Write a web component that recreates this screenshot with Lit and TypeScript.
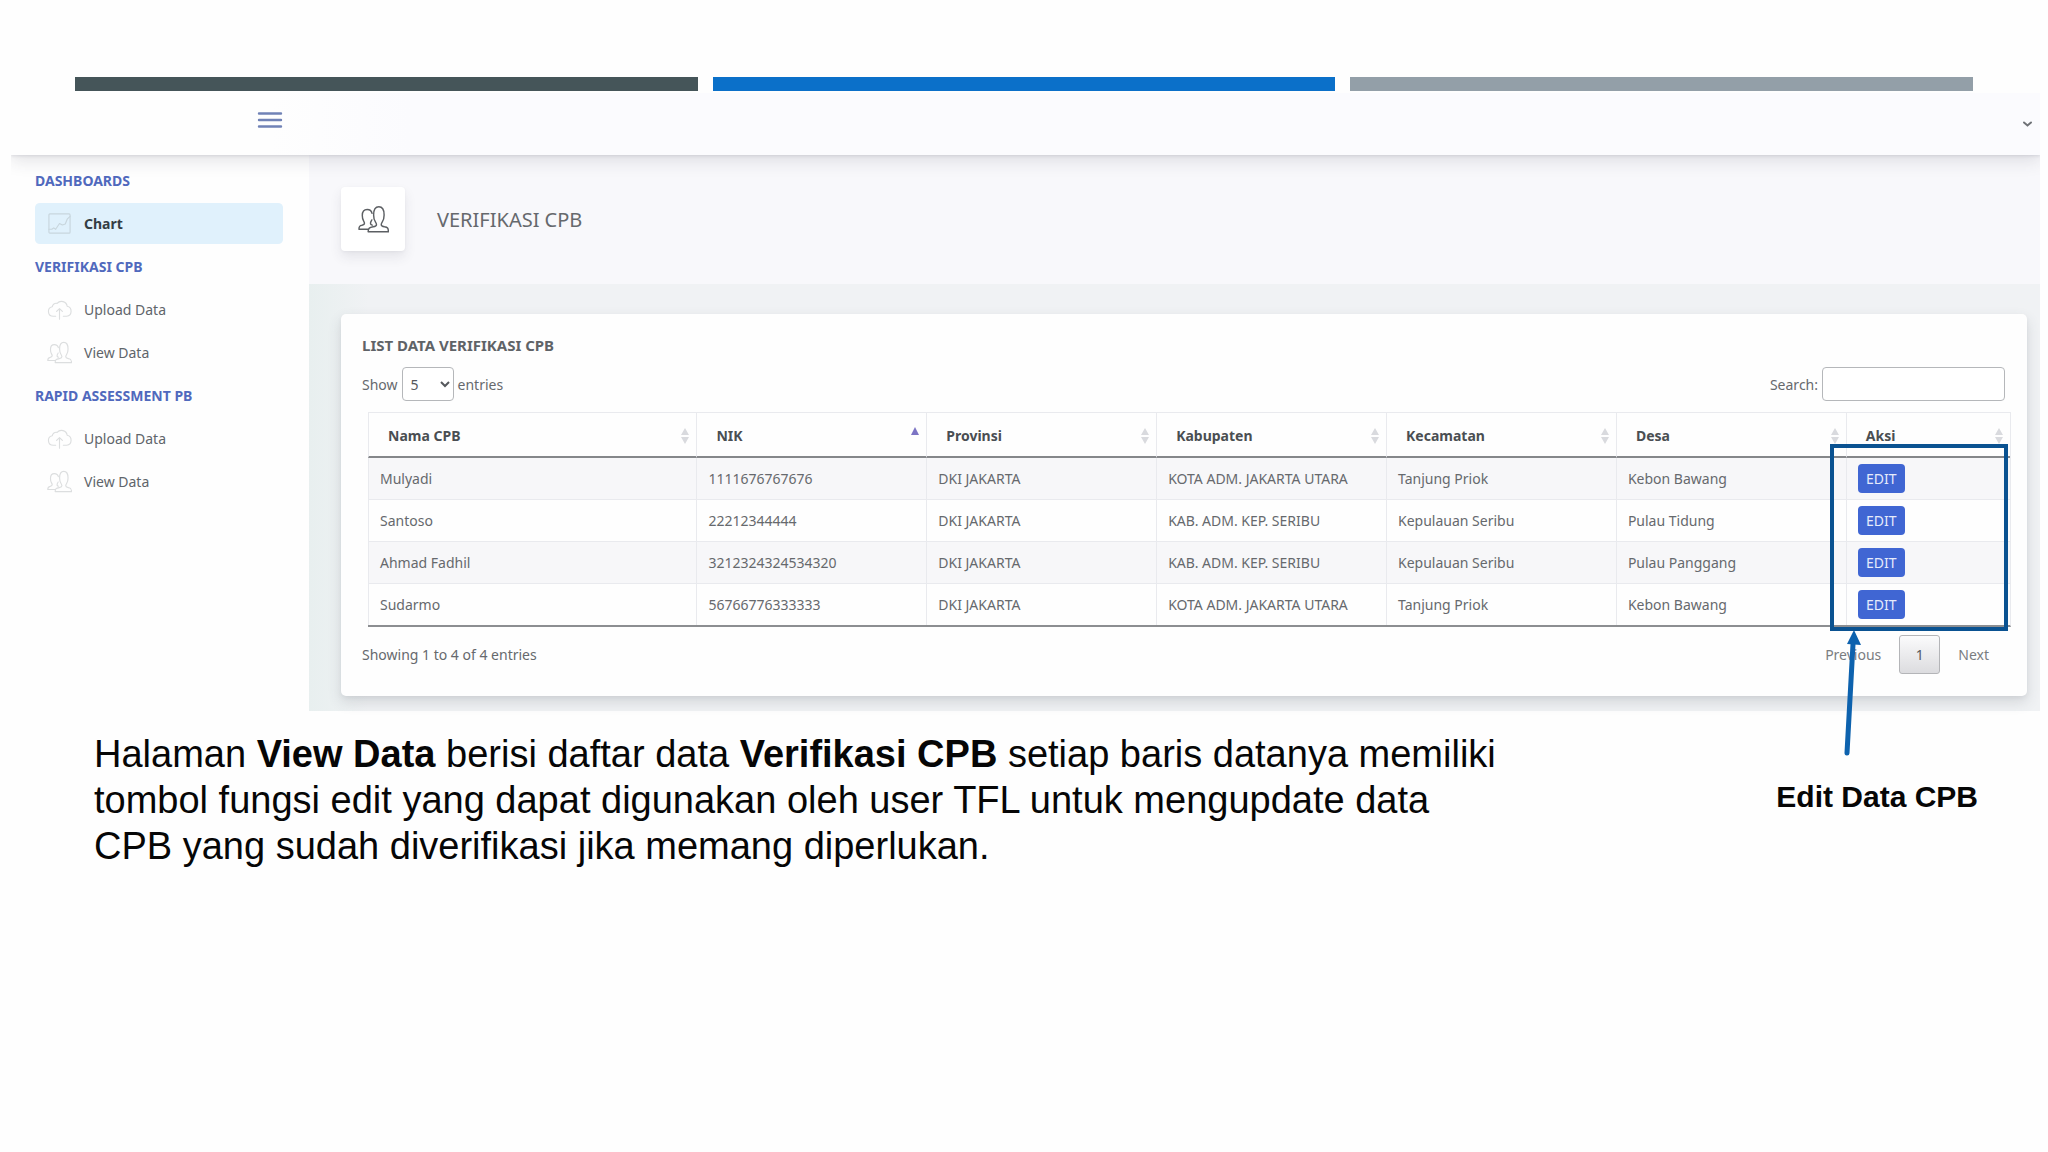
import { LitElement, html, css, svg } from "lit";
import { customElement, property, state } from "lit/decorators.js";
import { classMap } from "lit/directives/class-map.js";

type IconName = "chart" | "cloud" | "users";

const glyphs = {
  chart: svg`
    <rect x="2" y="2" width="22" height="20" rx="1"></rect>
    <path d="M2 18h3l2-1.500 2 1.500 4-6 3 1.500 3-1 2-5 3-3"></path>`,
  cloud: svg`
    <path d="M9 19H6.500a5 5 0 0 1-1-9.900 4 4 0 0 1 5-3.500 6 6 0 0 1 10.500 3 5.300 5.300 0 0 1-.5 10.400H17"></path>
    <path d="M13 22V11M10 14l3-3 3 3"></path>`,
  users: svg`
    <path d="M8.500 22.500h17c0-3.200-.8-3.800-3.200-4.200-1.500-.3-2.800-.8-2.800-1.800 0-.8.300-1.500.9-2.400 1-1.500 1.500-3.300 1.500-5.800C21.900 4 20.300 1.500 17.500 1.500S13.100 4 13.100 8.300c0 2.500.5 4.300 1.500 5.800.6.900.9 1.600.9 2.400 0 1-1.300 1.500-2.800 1.800-3 .6-4.200 1-4.200 4.200z"></path>
    <path d="M8.500 20.300H.8c0-2.600.7-3 2.500-3.300 1.500-.3 2.100-.7 2.100-1.600 0-.7-.3-1.200-.7-2C4 12.200 3.600 10.800 3.600 8.800 3.600 5.500 5.200 3.700 7.700 3.700c2 0 3.600 1 4.100 3.300M11.600 12.500c-1 1.500-1.300 2-1.100 3.200.1.700.6.900 1.400 1.200"></path>`,
};

@customElement("line-icon")
export class LineIcon extends LitElement {
  @property() name: IconName = "users";

  static styles = css`
    :host { display: block; }
    svg {
      display: block;
      width: 100%;
      fill: none;
      stroke: currentColor;
      stroke-width: 1.2;
      stroke-linejoin: round;
      stroke-linecap: round;
    }
  `;

  render() {
    return html`<svg viewBox="0 0 26 24" aria-hidden="true">${glyphs[this.name]}</svg>`;
  }
}

interface MenuItem { label: string; icon: IconName; active?: boolean; }
interface MenuGroup { title: string; items: MenuItem[]; }

const menu: MenuGroup[] = [
  { title: "DASHBOARDS", items: [{ label: "Chart", icon: "chart", active: true }] },
  {
    title: "VERIFIKASI CPB",
    items: [{ label: "Upload Data", icon: "cloud" }, { label: "View Data", icon: "users" }],
  },
  {
    title: "RAPID ASSESSMENT PB",
    items: [{ label: "Upload Data", icon: "cloud" }, { label: "View Data", icon: "users" }],
  },
];

@customElement("side-menu")
export class SideMenu extends LitElement {
  static styles = css`
    :host { display: block; padding: 4px 26px 0 24px; background: #fefefe; }
    .title, .link { height: 43px; display: flex; align-items: center; }
    .title { margin: 0; font-size: 14px; font-weight: 700; color: #5069bd; }
    .list { list-style: none; margin: 0; padding: 0; }
    .link {
      box-sizing: border-box;
      gap: 12px;
      padding: 0 12px;
      font-size: 14px;
      color: #60656a;
      text-decoration: none;
      border: solid transparent;
      border-width: 1px 0;
      border-radius: 5px;
      background-clip: padding-box;
    }
    .link.active { background-color: #e0f1fc; color: #343d44; font-weight: 700; }
    .icon { width: 25px; color: #dcdedf; }
    .active .icon { color: #c8d6dd; }
  `;

  render() {
    return html`<nav>
      ${menu.map((group) => html`
        <h2 class="title">${group.title}</h2>
        <ul class="list">
          ${group.items.map((item) => html`<li>
            <a href="#" class=${classMap({ link: true, active: !!item.active })}>
              <line-icon class="icon" name=${item.icon}></line-icon>${item.label}
            </a>
          </li>`)}
        </ul>`)}
    </nav>`;
  }
}

const columns = ["Nama CPB", "NIK", "Provinsi", "Kabupaten", "Kecamatan", "Desa", "Aksi"];

const rows = [
  ["Mulyadi", "1111676767676", "DKI JAKARTA", "KOTA ADM. JAKARTA UTARA", "Tanjung Priok", "Kebon Bawang"],
  ["Santoso", "22212344444", "DKI JAKARTA", "KAB. ADM. KEP. SERIBU", "Kepulauan Seribu", "Pulau Tidung"],
  ["Ahmad Fadhil", "3212324324534320", "DKI JAKARTA", "KAB. ADM. KEP. SERIBU", "Kepulauan Seribu", "Pulau Panggang"],
  ["Sudarmo", "56766776333333", "DKI JAKARTA", "KOTA ADM. JAKARTA UTARA", "Tanjung Priok", "Kebon Bawang"],
];

@customElement("data-card")
export class DataCard extends LitElement {
  @state() private sorted = "NIK";

  static styles = css`
    :host {
      display: block;
      padding: 20px 0 22px;
      background: #fefefe;
      border-radius: 5px;
      box-shadow: 0 6px 14px rgba(60, 70, 80, 0.16), 0 2px 4px rgba(60, 70, 80, 0.06);
      font-size: 14px;
      color: #66696d;
    }
    .heading { margin: 0 21px 11px; font-size: 15px; line-height: 22px; color: #5f6367; }
    .bar { display: flex; justify-content: space-between; align-items: center; margin: 0 22px 0 21px; }
    .field { display: flex; align-items: center; gap: 4px; height: 34px; }
    .length, .search {
      box-sizing: border-box;
      height: 34px;
      border: 1px solid #b5b7ba;
      border-radius: 4px;
      background: #fff;
      color: #55585c;
      font: inherit;
    }
    .length { width: 52px; padding: 0 4px; }
    .search { width: 183px; padding: 4px; }
    .wrap { position: relative; margin: 11px 16px 8px 27px; }
    .table {
      width: 100%;
      table-layout: fixed;
      border-collapse: separate;
      border-spacing: 0;
      border-right: 1px solid #e9eaee;
      border-bottom: 2px solid #8c8e91;
    }
    .first { width: 20%; }
    .last { width: 10%; }
    .table th {
      box-sizing: border-box;
      height: 46px;
      padding: 2px 0 0;
      border: solid #e9eaee;
      border-width: 1px 0 0 1px;
      border-bottom: 2px solid #85878a;
    }
    .sort {
      display: flex;
      width: 100%;
      align-items: center;
      justify-content: space-between;
      padding: 0 7px 0 19px;
      border: 0;
      background: none;
      font: inherit;
      font-weight: 700;
      color: #4a4e52;
    }
    .arrows { width: 8px; height: 18px; fill: #d9dade; }
    .arrows .on { fill: #7c74c4; }
    .table td {
      box-sizing: border-box;
      height: 42px;
      padding: 0 11px;
      border: solid #e9eaee;
      border-width: 0 0 1px 1px;
      white-space: nowrap;
    }
    .table tbody tr:nth-child(odd) { background: #f7f7f9; }
    .table tbody tr:last-child td { height: 41px; border-bottom: 0; }
    .edit {
      display: block;
      height: 29px;
      width: 47px;
      padding: 0;
      border: 0;
      border-radius: 4px;
      background: #4066d3;
      color: #e6ebfb;
      font: inherit;
    }
    .frame {
      position: absolute;
      box-sizing: border-box;
      top: 32px;
      right: 3px;
      bottom: -4px;
      width: 178px;
      border: 4px solid #0a5291;
      pointer-events: none;
    }
    .pointer {
      position: absolute;
      top: calc(100% + 3px);
      right: 147px;
      width: 24px;
      height: 126px;
      pointer-events: none;
    }
    .pager { display: flex; align-items: center; gap: 18px; padding-right: 16px; }
    .step, .page { border: 0; padding: 0; background: none; font: inherit; color: #7a7d81; }
    .page {
      width: 41px;
      height: 39px;
      border: 1px solid #b4b5b8;
      border-radius: 3px;
      background: linear-gradient(#fbfbfc, #dcdcdf);
      color: #55585c;
    }
  `;

  private arrows(name: string) {
    return name === this.sorted
      ? html`<svg class="arrows" viewBox="0 0 8 18"><path class="on" d="M4 0l4 8H0z"></path></svg>`
      : html`<svg class="arrows" viewBox="0 0 8 18"><path d="M4 1l4 7H0zM4 17l4-7H0z"></path></svg>`;
  }

  render() {
    return html`
      <h2 class="heading">LIST DATA VERIFIKASI CPB</h2>
      <div class="bar">
        <div class="field">
          <label for="length">Show</label>
          <select class="length" id="length"><option>5</option><option>10</option><option>25</option></select>
          <span>entries</span>
        </div>
        <div class="field">
          <label for="search">Search:</label>
          <input class="search" id="search" type="search" />
        </div>
      </div>
      <div class="wrap">
        <table class="table">
          <colgroup><col class="first" /><col span="5" /><col class="last" /></colgroup>
          <thead>
            <tr>${columns.map((name) => html`<th scope="col">
              <button class="sort" @click=${() => (this.sorted = name)}>${name}${this.arrows(name)}</button>
            </th>`)}</tr>
          </thead>
          <tbody>
            ${rows.map((row) => html`<tr>
              ${row.map((cell) => html`<td>${cell}</td>`)}
              <td><button class="edit">EDIT</button></td>
            </tr>`)}
          </tbody>
        </table>
        <div class="frame"></div>
        <svg class="pointer" viewBox="0 0 24 126" aria-hidden="true">
          <path d="M7 123L13 14" stroke="#0d62ae" stroke-width="5" stroke-linecap="round"></path>
          <path d="M14 0l7 15-14-1z" fill="#0d62ae"></path>
        </svg>
      </div>
      <div class="bar">
        <span>Showing 1 to 4 of 4 entries</span>
        <div class="pager">
          <button class="step">Previous</button>
          <button class="page">1</button>
          <button class="step">Next</button>
        </div>
      </div>
    `;
  }
}

@customElement("app-root")
export class AppRoot extends LitElement {
  static styles = css`
    :host {
      display: block;
      min-height: 100vh;
      box-sizing: border-box;
      padding-top: 77px;
      background: #fefefe;
      font-family: "Noto Sans", "Open Sans", sans-serif;
    }
    .stripes { display: grid; grid-template-columns: repeat(3, 1fr); gap: 15px; margin: 0 75px; }
    .stripe { height: 14px; background: #455559; }
    .stripe.blue { background: #0b70c9; }
    .stripe.grey { background: #939fa8; }
    .app { margin: 2px 8px 0 11px; }
    .top {
      position: relative;
      display: flex;
      align-items: center;
      justify-content: space-between;
      height: 62px;
      padding: 0 7px 0 246px;
      box-sizing: border-box;
      background: linear-gradient(90deg, #fefefe 0, #fefefe 260px, #fbfbfe 400px);
      box-shadow: 0 6px 16px rgba(50, 50, 70, 0.13), 0 1px 3px rgba(50, 50, 70, 0.12);
      clip-path: inset(0 0 -30px 0);
    }
    .tool { display: block; padding: 0; border: 0; background: none; }
    .menu { padding-bottom: 8px; }
    .tool svg { display: block; fill: none; stroke: #7082b6; stroke-width: 2.4; stroke-linecap: round; }
    .tool .caret { stroke: #6f7277; stroke-width: 2; }
    .body { display: grid; grid-template-columns: 298px minmax(0, 1fr); }
    .title {
      box-sizing: border-box;
      display: flex;
      align-items: center;
      gap: 32px;
      height: 129px;
      padding: 0 0 1px 32px;
      background: #f8f8fb;
    }
    .badge {
      display: grid;
      place-items: center;
      width: 64px;
      height: 64px;
      border-radius: 4px;
      background: #fff;
      box-shadow: 0 6px 12px rgba(60, 60, 80, 0.1), 0 1px 3px rgba(60, 60, 80, 0.05);
      color: #5c5f63;
    }
    .badge line-icon { width: 31px; }
    .name { margin: 0; font-size: 20px; font-weight: 400; color: #66696d; }
    .main { padding: 30px 13px 15px 32px; background: linear-gradient(90deg, #e8efef 0, #f0f2f4 60px); }
    .notes {
      display: flex;
      justify-content: space-between;
      align-items: flex-start;
      padding: 20px 70px 0 94px;
      font-family: "Liberation Sans", Arial, sans-serif;
      color: #060606;
    }
    .text { margin: 0; max-width: 1412px; font-size: 38px; line-height: 46px; }
    .caption { margin: 48px 0 0; font-size: 30px; line-height: 36px; font-weight: 700; }
  `;

  render() {
    return html`
      <div class="stripes">
        <div class="stripe"></div>
        <div class="stripe blue"></div>
        <div class="stripe grey"></div>
      </div>
      <div class="app">
        <header class="top">
          <button class="tool menu" aria-label="Menu">
            <svg width="26" height="18" viewBox="0 0 26 18"><path d="M2 2.500h22M2 9h22M2 15.500h22"></path></svg>
          </button>
          <button class="tool" aria-label="Akun">
            <svg class="caret" width="12" height="8" viewBox="0 0 12 8"><path d="M3 2.500l3.500 3 3.500-3"></path></svg>
          </button>
        </header>
        <div class="body">
          <side-menu></side-menu>
          <div>
            <div class="title">
              <div class="badge"><line-icon name="users"></line-icon></div>
              <h1 class="name">VERIFIKASI CPB</h1>
            </div>
            <main class="main"><data-card></data-card></main>
          </div>
        </div>
      </div>
      <div class="notes">
        <p class="text">
          Halaman <b>View Data</b> berisi daftar data <b>Verifikasi CPB</b> setiap baris datanya memiliki tombol
          fungsi edit yang dapat digunakan oleh user TFL untuk mengupdate data CPB yang sudah diverifikasi jika
          memang diperlukan.
        </p>
        <p class="caption">Edit Data CPB</p>
      </div>
    `;
  }
}
